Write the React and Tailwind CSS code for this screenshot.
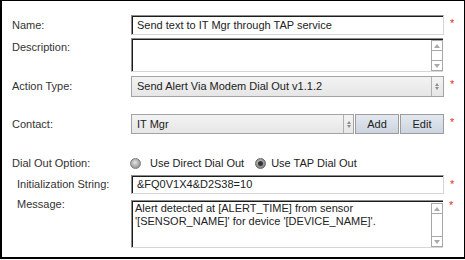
import React from "react";

function Star({ mt = "mt-[2px]" }) {
  return (
    <div className={`ml-[6px] self-start text-[11px] leading-[13px] text-[#e0302b] ${mt}`}>*</div>
  );
}

function Tri({ up }) {
  return up ? (
    <div className="w-0 h-0 border-l-[3px] border-r-[3px] border-b-[4px] border-l-transparent border-r-transparent border-b-[#a9a9a9]" />
  ) : (
    <div className="w-0 h-0 border-l-[3px] border-r-[3px] border-t-[4px] border-l-transparent border-r-transparent border-t-[#a9a9a9]" />
  );
}

function Scroll({ mt = "mt-[1px]" }) {
  return (
    <div className={`${mt} w-[12px] flex flex-col border border-[#a8a8a8] bg-white`}>
      <div className="h-[10px] border-b border-[#a8a8a8] flex items-center justify-center">
        <Tri up />
      </div>
      <div className="flex-1" />
      <div className="h-[10px] border-t border-[#a8a8a8] flex items-center justify-center">
        <Tri />
      </div>
    </div>
  );
}

function Spin() {
  return (
    <div className="w-[10px] self-stretch border-l border-[#b0b0b0] flex flex-col items-center justify-center gap-[1px]">
      <div className="w-0 h-0 border-l-[2px] border-r-[2px] border-b-[3px] border-l-transparent border-r-transparent border-b-[#8a8a8a]" />
      <div className="w-0 h-0 border-l-[2px] border-r-[2px] border-t-[3px] border-l-transparent border-r-transparent border-t-[#8a8a8a]" />
    </div>
  );
}

const inset =
  "border-t border-l border-t-[#8c8c8c] border-l-[#8c8c8c] border-b border-b-[#d6d6d6] shadow-[inset_1px_1px_0_#1c1c1c] bg-white";

export default function App() {
  return (
    <div className="w-[465px] h-[259px] border-t border-r border-l-2 border-b-2 border-black bg-white font-['Liberation_Sans',Arial,sans-serif] text-[11px] leading-[13px] text-[#333] flex flex-col pt-[14px] pl-[10px]">
      {/* Name */}
      <div className="flex items-center h-[20px]">
        <div className="w-[119px]">Name:</div>
        <div className={`w-[313px] h-[20px] ${inset} border-r border-r-[#d6d6d6] pl-[5px] pt-[1px] flex items-center text-[#222]`}>
          Send text to IT Mgr through TAP service
        </div>
        <Star />
      </div>

      {/* Description */}
      <div className="flex mt-[3px] h-[34px]">
        <div className="w-[119px] pt-[3px]">Description:</div>
        <div className={`w-[312px] h-[34px] ${inset} flex`}>
          <div className="flex-1" />
          <Scroll />
        </div>
      </div>

      {/* Action Type */}
      <div className="flex items-center mt-[4px] h-[21px]">
        <div className="w-[119px]">Action Type:</div>
        <div className="w-[313px] h-[21px] border border-[#a3a3a3] bg-gradient-to-b from-[#f3f3f3] to-[#e6e6e6] flex items-center text-[#222]">
          <div className="flex-1 pl-[5px]">Send Alert Via Modem Dial Out v1.1.2</div>
          <div className="w-[12px] self-stretch flex">
            <Spin />
          </div>
        </div>
        <Star />
      </div>

      {/* Contact */}
      <div className="flex items-center mt-[17px] h-[20px]">
        <div className="w-[119px]">Contact:</div>
        <div className="w-[223px] h-[20px] border border-[#a3a3a3] bg-gradient-to-b from-[#f3f3f3] to-[#e6e6e6] flex items-center text-[#222]">
          <div className="flex-1 pl-[5px]">IT Mgr</div>
          <Spin />
        </div>
        <div className="ml-[1px] w-[44px] h-[20px] border border-[#9c9c9c] bg-gradient-to-b from-[#e4e9f0] to-[#ccd4de] flex items-center justify-center text-[#222]">
          Add
        </div>
        <div className="ml-[1px] w-[44px] h-[20px] border border-[#9c9c9c] bg-gradient-to-b from-[#e4e9f0] to-[#ccd4de] flex items-center justify-center text-[#222]">
          Edit
        </div>
        <Star />
      </div>

      {/* Dial Out Option */}
      <div className="flex items-center mt-[23px] h-[13px]">
        <div className="w-[119px]">Dial Out Option:</div>
        <div className="-ml-[1px] w-[11px] h-[11px] rounded-full border border-[#7c7c7c] bg-[radial-gradient(circle_at_45%_40%,#e6e6e6,#aaaaaa_55%,#7e7e7e)]" />
        <div className="ml-[9px] text-[#222]">Use Direct Dial Out</div>
        <div className="ml-[11px] w-[11px] h-[11px] rounded-full border border-[#666] bg-[radial-gradient(circle_at_45%_40%,#cfcfcf,#8e8e8e_60%,#646464)] flex items-center justify-center">
          <div className="w-[5px] h-[5px] rounded-full bg-[#333]" />
        </div>
        <div className="ml-[5px] text-[#222]">Use TAP Dial Out</div>
      </div>

      {/* Initialization String */}
      <div className="flex items-center mt-[5px] h-[19px]">
        <div className="w-[119px] pl-[5px]">Initialization String:</div>
        <div className={`w-[313px] h-[19px] ${inset} border-r border-r-[#d6d6d6] pl-[5px] flex items-center text-[#222]`}>
          &amp;FQ0V1X4&amp;D2S38=10
        </div>
        <Star mt="mt-[3px]" />
      </div>

      {/* Message */}
      <div className="flex mt-[6px] h-[48px]">
        <div className="w-[119px] pl-[5px] -mt-[2px]">Message:</div>
        <div className={`w-[312px] h-[48px] ${inset} flex`}>
          <div className="flex-1 pl-[3px] pt-[1px] text-[#222] leading-[13px]">
            Alert detected at [ALERT_TIME] from sensor
            <br />
            '[SENSOR_NAME]' for device '[DEVICE_NAME]'.
          </div>
          <Scroll mt="mt-[2px]" />
        </div>
        <Star mt="-mt-[1px]" />
      </div>
    </div>
  );
}
